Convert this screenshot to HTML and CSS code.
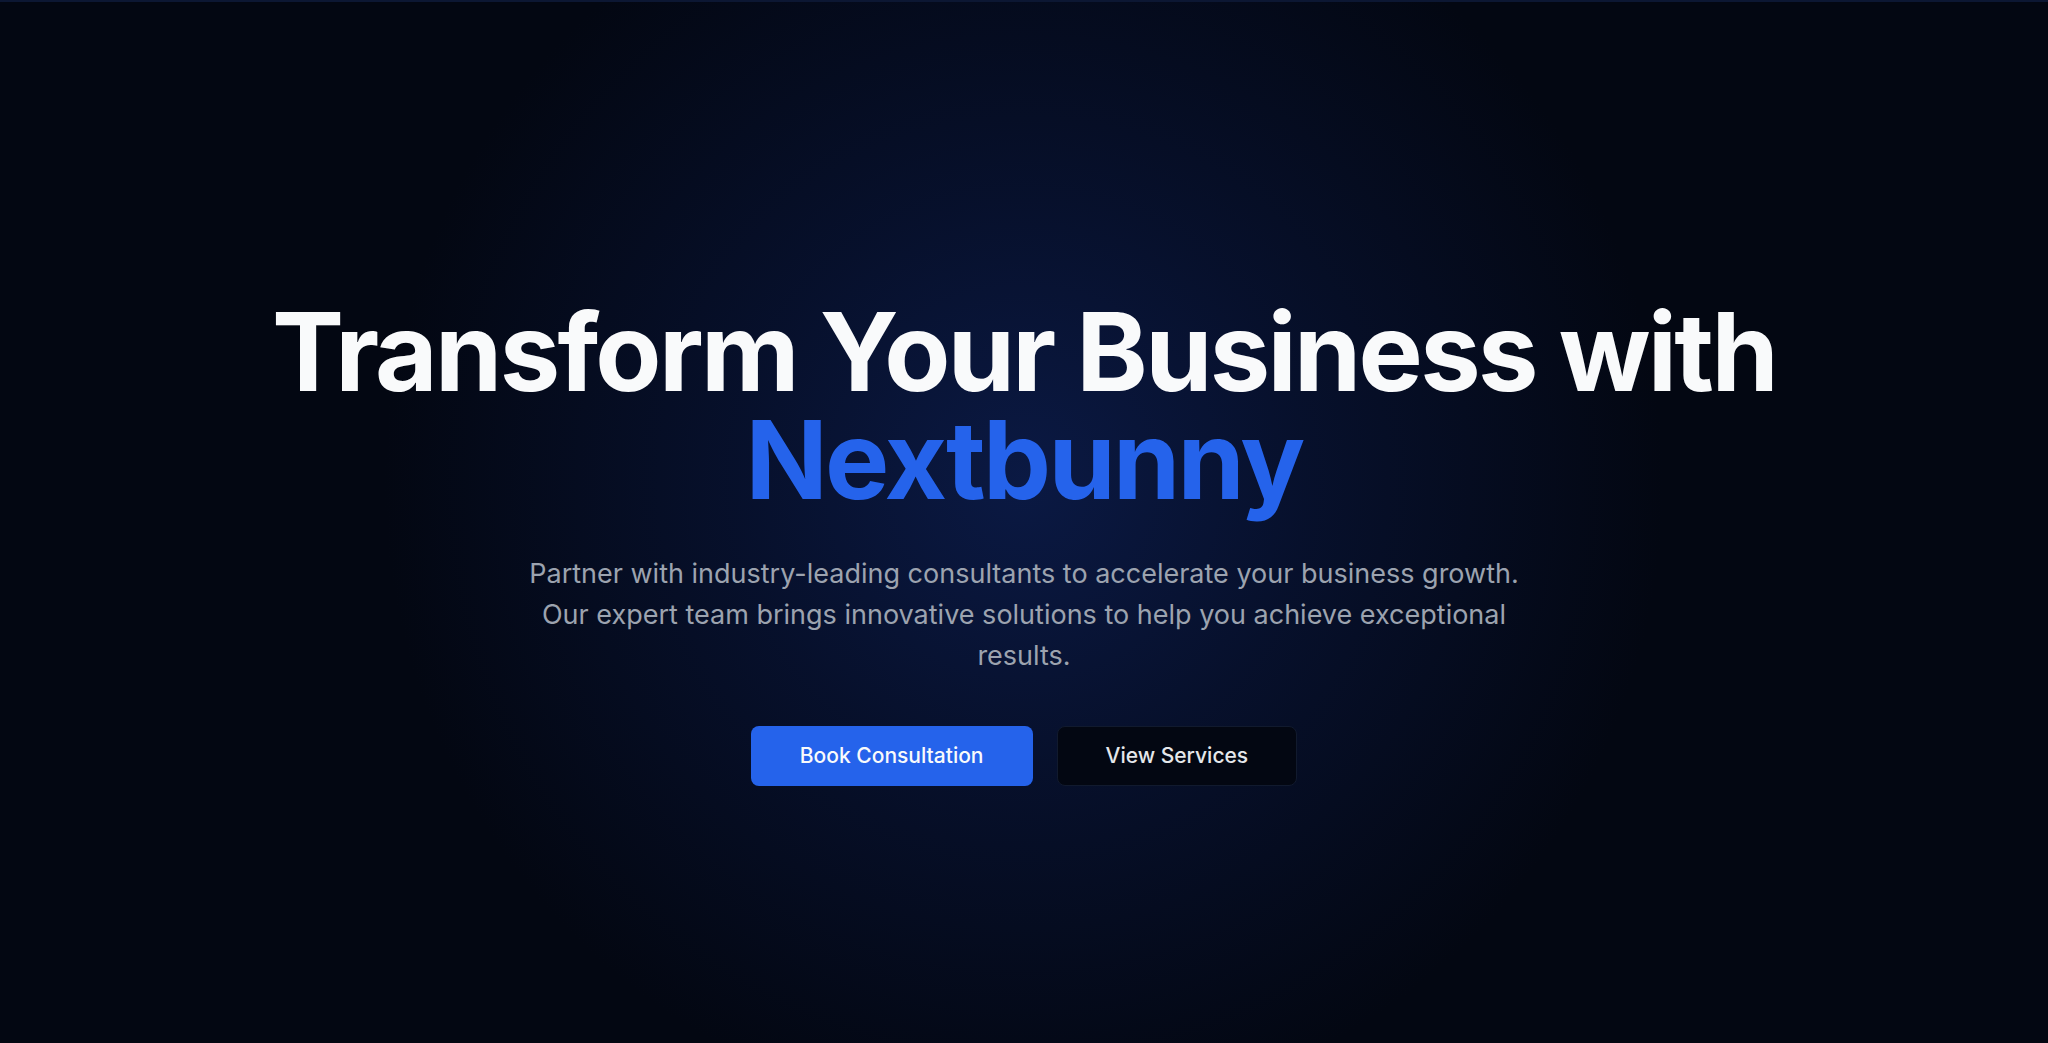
FILE: index.html
```html
<!DOCTYPE html>
<html lang="en">
<head>
<meta charset="utf-8">
<title>Nextbunny</title>
<link rel="stylesheet" href="styles.css">
</head>
<body>
<main class="hero">
  <div class="hero-glow"></div>
  <div class="hero-content">
    <h1 class="hero-title">Transform Your Business with <span class="brand">Nextbunny</span></h1>
    <p class="hero-text">Partner with industry-leading consultants to accelerate your business growth. Our expert team brings innovative solutions to help you achieve exceptional results.</p>
    <div class="hero-actions">
      <a class="btn btn-primary" href="#">Book Consultation</a>
      <a class="btn btn-secondary" href="#">View Services</a>
    </div>
  </div>
</main>
</body>
</html>
```

FILE: styles.css
```css
* { box-sizing: border-box; }
html, body {
  margin: 0;
  padding: 0;
  height: 100%;
}
body {
  background: #030712;
  font-family: Inter, "Noto Sans", "Liberation Sans", sans-serif;
  color: #f9fafb;
  overflow: hidden;
}
.hero {
  position: relative;
  min-height: 100vh;
  display: flex;
  align-items: center;
  justify-content: center;
  padding-top: 38px;
  border-top: 2px solid #0c1733;
  background: #030712;
}
.hero-glow {
  position: absolute;
  inset: 0;
  background: radial-gradient(circle 640px at 50% 480px, rgba(11, 26, 70, 0.95) 0%, rgba(8, 19, 52, 0.75) 45%, rgba(3, 7, 18, 0) 100%);
  pointer-events: none;
}
.hero-content {
  position: relative;
  display: flex;
  flex-direction: column;
  align-items: center;
  text-align: center;
}
.hero-title {
  margin: 0;
  font-size: 108px;
  line-height: 108px;
  font-weight: 700;
  letter-spacing: -0.025em;
  color: #f9fafb;
  max-width: 1600px;
}
.brand {
  display: block;
  color: #2563eb;
}
.hero-text {
  margin: 39px 0 0;
  max-width: 1010px;
  font-size: 27px;
  line-height: 41px;
  color: #9ca3af;
}
.hero-actions {
  margin-top: 50px;
  display: flex;
  gap: 24px;
}
.btn {
  display: inline-block;
  padding: 15px 48px;
  font-size: 21px;
  line-height: 28px;
  font-weight: 500;
  text-decoration: none;
  border-radius: 8px;
  border: 1px solid transparent;
}
.btn-primary {
  background: #2563eb;
  color: #f9fafb;
}
.btn-secondary {
  background: #030712;
  color: #e5e7eb;
  border-color: #111a2e;
}
```
